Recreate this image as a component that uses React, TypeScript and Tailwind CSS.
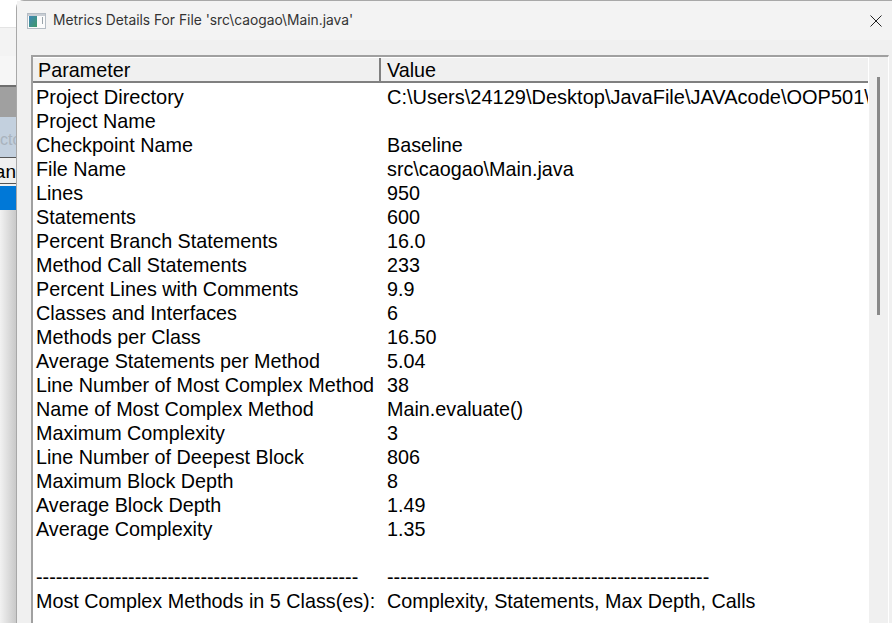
const rows: [string, string][] = [
  ["Project Directory", "C:\\Users\\24129\\Desktop\\JavaFile\\JAVAcode\\OOP501\\"],
  ["Project Name", ""],
  ["Checkpoint Name", "Baseline"],
  ["File Name", "src\\caogao\\Main.java"],
  ["Lines", "950"],
  ["Statements", "600"],
  ["Percent Branch Statements", "16.0"],
  ["Method Call Statements", "233"],
  ["Percent Lines with Comments", "9.9"],
  ["Classes and Interfaces", "6"],
  ["Methods per Class", "16.50"],
  ["Average Statements per Method", "5.04"],
  ["Line Number of Most Complex Method", "38"],
  ["Name of Most Complex Method", "Main.evaluate()"],
  ["Maximum Complexity", "3"],
  ["Line Number of Deepest Block", "806"],
  ["Maximum Block Depth", "8"],
  ["Average Block Depth", "1.49"],
  ["Average Complexity", "1.35"],
  ["", ""],
  ["-------------------------------------------------", "-------------------------------------------------"],
  ["Most Complex Methods in 5 Class(es):", "Complexity, Statements, Max Depth, Calls"],
];

function Backdrop() {
  return (
    <div className="w-4 shrink-0 flex flex-col overflow-hidden">
      <div className="h-[27px] bg-white" />
      <div className="h-[29px] bg-[#f3f3f3] border-t border-[#e4e4e4]" />
      <div className="h-[29px] bg-[#f6f6f6]" />
      <div className="h-[32px] bg-[#a0a0a0] border-t-2 border-[#6e6e6e]" />
      <div className="h-[40px] bg-[#c3d0de] text-[#a9b3bd] text-[16px] leading-[46px] whitespace-nowrap">cto</div>
      <div className="h-[27px] flex justify-end bg-[#f0f0f0] border-y border-[#555] text-[19px] leading-[28px] text-black whitespace-nowrap">an</div>
      <div className="h-[2px] bg-[#f0f0f0]" />
      <div className="h-[24px] bg-[#0078d7]" />
      <div className="flex-1 bg-gradient-to-r from-[#f2f2f2] to-[#c9c9c9]" />
    </div>
  );
}

export default function App() {
  return (
    <div className="w-[892px] h-[623px] flex overflow-hidden bg-white font-['Liberation_Sans',sans-serif]">
      <Backdrop />
      <div className="flex-1 flex flex-col rounded-tl-lg bg-[#f0f0f0] border-l border-t border-[#a8a8a8]">
        <div className="h-[39px] shrink-0 flex items-center bg-[#f3f3f3] pl-[10px] pr-[10px]">
          <svg width="19" height="16" viewBox="0 0 19 16" className="shrink-0">
            <defs>
              <linearGradient id="icon-fill" x1="0" y1="0" x2="1" y2="1">
                <stop offset="0" stopColor="#3f86b8" />
                <stop offset="1" stopColor="#3f9a68" />
              </linearGradient>
            </defs>
            <rect x="0.5" y="0.5" width="18" height="15" fill="#fbfbfb" stroke="#b4bcc4" />
            <rect x="1" y="1" width="17" height="2" fill="#c9ced4" />
            <rect x="2" y="3" width="8" height="11" fill="url(#icon-fill)" />
            <rect x="15" y="4" width="1" height="7" fill="#9aa4aa" />
          </svg>
          <span className="ml-[7px] pb-[1px] text-[13.8px] text-[#333] font-['Inter',sans-serif] flex-1 whitespace-nowrap">
            Metrics Details For File 'src\caogao\Main.java'
          </span>
          <svg width="12" height="12" viewBox="0 0 12 12" fill="none" stroke="#222" strokeWidth="1">
            <path d="M0.5 0.5 11.5 11.5M11.5 0.5 0.5 11.5" />
          </svg>
        </div>
        <div className="flex-1 min-h-0 pt-[15px] pl-[14px] pr-[3px]">
          <div className="h-full flex bg-white border-l-2 border-t-2 border-r border-[#a0a0a0] border-r-white overflow-hidden">
            <div className="w-[835px] shrink-0 overflow-hidden text-[19.75px] leading-[24px] text-black">
              <div className="flex h-[26px] bg-[#f0f0f0] border-b-2 border-[#808080] border-t border-t-white pl-[1px] mb-[2px]">
                <div className="w-[347px] shrink-0 pl-[4px] border-r-2 border-[#808080] leading-[25px]">Parameter</div>
                <div className="flex-1 pl-[6px] leading-[25px]">Value</div>
              </div>
              {rows.map(([param, value], i) => (
                <div key={i} className={i === 0 ? "flex h-[24px] whitespace-nowrap text-[20px]" : "flex h-[24px] whitespace-nowrap"}>
                  <div className="w-[354px] shrink-0 pl-[3px]">{param}</div>
                  <div>{value}</div>
                </div>
              ))}
            </div>
            <div className="flex-1 bg-[#f0f0f0] border-l border-white relative">
              <div className="absolute left-[8px] top-[20px] w-[3px] h-[238px] bg-[#8a8a8a]" />
            </div>
          </div>
        </div>
      </div>
    </div>
  );
}
